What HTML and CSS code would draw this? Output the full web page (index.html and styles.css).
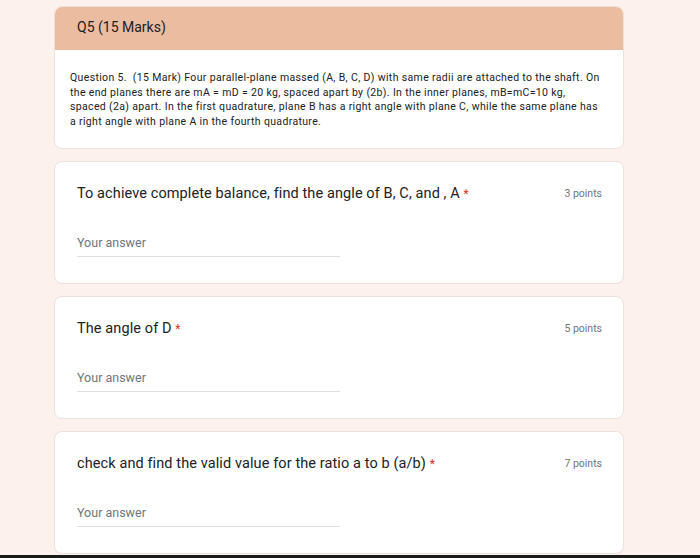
FILE: index.html
```html
<!DOCTYPE html>
<html>
<head>
<meta charset="utf-8">
<link rel="stylesheet" href="styles.css">
</head>
<body>
<div class="page">
  <div class="form">
    <section class="card section-card">
      <div class="section-head">Q5 (15 Marks)</div>
      <div class="section-body">Question 5.&nbsp; (15 Mark) Four parallel-plane massed (A, B, C, D) with same radii are attached to the shaft. On the end planes there are mA = mD = 20 kg, spaced apart by (2b). In the inner planes, mB=mC=10 kg, spaced (2a) apart. In the first quadrature, plane B has a right angle with plane C, while the same plane has a right angle with plane A in the fourth quadrature.</div>
    </section>
    <section class="card question">
      <div class="q-row">
        <div class="q-title">To achieve complete balance, find the angle of B, C, and , A <span class="req">*</span></div>
        <div class="points">3 points</div>
      </div>
      <div class="answer">Your answer</div>
    </section>
    <section class="card question">
      <div class="q-row">
        <div class="q-title">The angle of D <span class="req">*</span></div>
        <div class="points">5 points</div>
      </div>
      <div class="answer">Your answer</div>
    </section>
    <section class="card question">
      <div class="q-row">
        <div class="q-title">check and find the valid value for the ratio a to b (a/b) <span class="req">*</span></div>
        <div class="points">7 points</div>
      </div>
      <div class="answer">Your answer</div>
    </section>
  </div>
  <div class="bottom-bar"></div>
</div>
</body>
</html>
```

FILE: styles.css
```css
html, body {
  margin: 0;
  padding: 0;
}
body {
  background: #fcf1ec;
  font-family: Roboto, "Noto Sans", sans-serif;
  color: #202124;
  height: 558px;
  overflow: hidden;
}
.page {
  display: flex;
  flex-direction: column;
}
.form {
  width: 570px;
  margin-left: 54px;
  padding-top: 6px;
  display: flex;
  flex-direction: column;
  gap: 12px;
}
.card {
  background: #fff;
  border: 1px solid #ebe2dd;
  border-radius: 8px;
  box-sizing: border-box;
}
.section-card {
  overflow: hidden;
  height: 143px;
}
.section-head {
  background: #ebbca0;
  height: 43px;
  box-sizing: border-box;
  padding: 12px 0 0 22px;
  font-size: 14px;
  color: #202124;
}
.section-body {
  padding: 21px 22px 0 15px;
  font-size: 10.5px;
  letter-spacing: 0.35px;
  line-height: 14.6px;
  color: #202124;
}
.question {
  height: 123px;
  padding: 23px 21px 0 22px;
}
.q-row {
  display: flex;
  justify-content: space-between;
  align-items: flex-start;
}
.q-title {
  font-size: 14.5px;
  letter-spacing: 0.1px;
  line-height: 18px;
  color: #202124;
}
.req {
  color: #d93025;
  font-size: 12px;
}
.points {
  font-size: 10.5px;
  line-height: 18px;
  color: #70757a;
}
.answer {
  width: 263px;
  margin-top: 32px;
  font-size: 12.5px;
  line-height: 16px;
  color: #70757a;
  padding-bottom: 5px;
  border-bottom: 1px solid #e0e0e0;
}
.bottom-bar {
  margin-top: 1px;
  height: 4px;
  background: #1a1a1a;
}
```
